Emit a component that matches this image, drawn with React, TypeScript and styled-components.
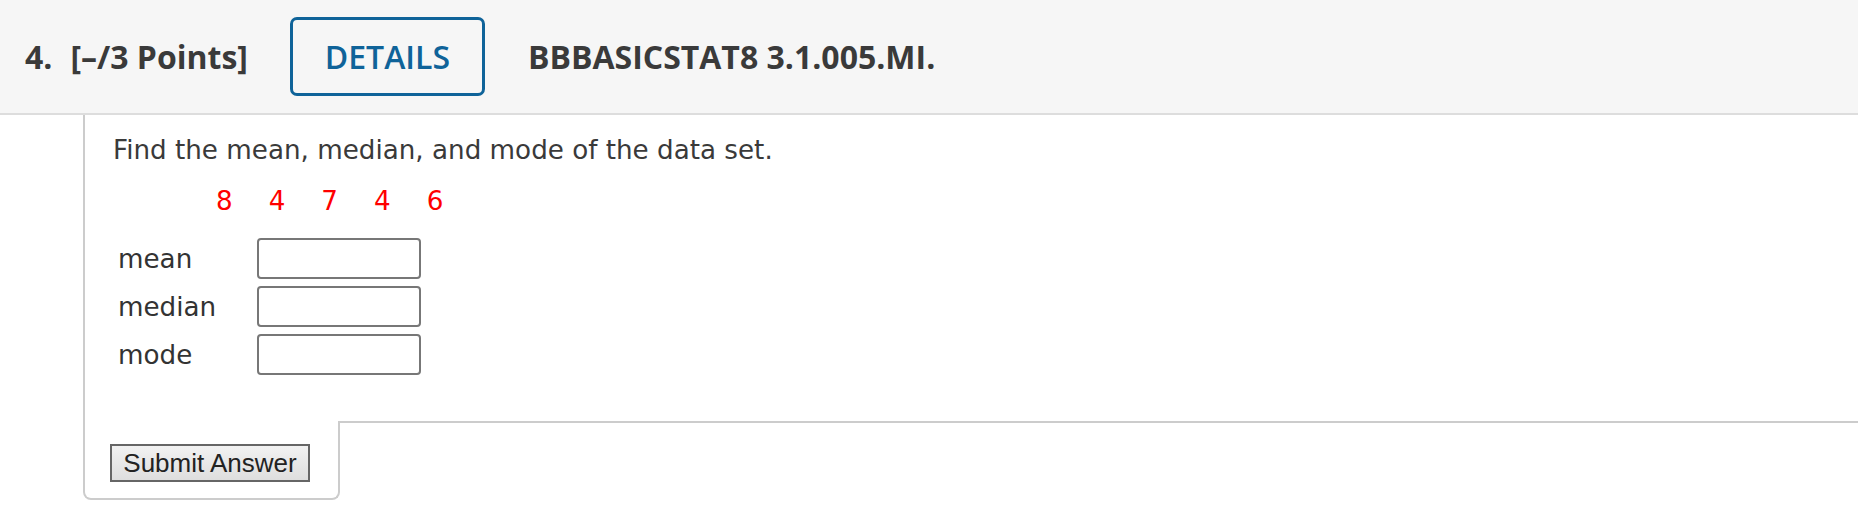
import React from "react";
import styled, { createGlobalStyle } from "styled-components";

const GlobalStyle = createGlobalStyle`
  html, body {
    margin: 0;
    padding: 0;
    background: #ffffff;
  }
  body {
    width: 1858px;
    font-family: "DejaVu Sans", Verdana, sans-serif;
    color: #333333;
  }
`;

const Page = styled.div`
  display: flex;
  flex-direction: column;
`;

const Header = styled.div`
  height: 113px;
  background: #f6f6f6;
  border-bottom: 2px solid #dddddd;
  display: flex;
  align-items: center;
  padding-left: 25px;
  font-family: "Open Sans", sans-serif;
  font-size: 32px;
  color: #3a3a3a;
`;

const QuestionNumber = styled.span`
  font-weight: 700;
`;

const Points = styled.span`
  font-weight: 700;
  margin-left: 18px;
`;

const DetailsButton = styled.button`
  margin-left: 42px;
  width: 195px;
  height: 79px;
  border: 3px solid #0f6399;
  border-radius: 7px;
  background: transparent;
  color: #0f6399;
  font-family: "Open Sans", sans-serif;
  font-size: 32px;
  font-weight: 600;
  padding: 0;
  cursor: pointer;
`;

const Title = styled.span`
  font-weight: 700;
  margin-left: 43px;
`;

const Card = styled.div`
  margin-left: 83px;
  display: flex;
  flex-direction: column;
`;

const Body = styled.div`
  border-left: 2px solid #cccccc;
  padding: 19px 0 46px 28px;
`;

const Prompt = styled.div`
  font-size: 26.2px;
  line-height: 32px;
  color: #3a3a3a;
`;

const DataRow = styled.div`
  display: flex;
  gap: 36px;
  margin: 19px 0 0 103px;
  font-size: 26.2px;
  line-height: 32px;
  color: #ff0000;
`;

const Fields = styled.div`
  display: flex;
  flex-direction: column;
  gap: 7px;
  margin: 21px 0 0 5px;
`;

const FieldRow = styled.div`
  display: flex;
  align-items: center;
`;

const FieldLabel = styled.label`
  width: 139px;
  font-size: 26.2px;
  line-height: 32px;
  color: #333333;
`;

const AnswerInput = styled.input`
  box-sizing: border-box;
  width: 164px;
  height: 41px;
  border: 2px solid #777777;
  border-radius: 4px;
  background: #ffffff;
  padding: 0 6px;
  font-size: 24px;
  outline: none;
`;

const Footer = styled.div`
  display: flex;
  align-items: flex-start;
`;

const SubmitBox = styled.div`
  box-sizing: border-box;
  width: 257px;
  border-left: 2px solid #cccccc;
  border-right: 2px solid #cccccc;
  border-bottom: 2px solid #cccccc;
  border-radius: 0 0 8px 8px;
  padding: 23px 0 16px 25px;
`;

const SubmitButton = styled.button`
  box-sizing: border-box;
  width: 200px;
  height: 38px;
  border: 2px solid #666666;
  border-radius: 0;
  background: linear-gradient(#f2f2f2, #dedede);
  color: #222222;
  font-family: "Liberation Sans", Arial, sans-serif;
  font-size: 26px;
  padding: 0;
  line-height: 1;
`;

const FooterRest = styled.div`
  flex: 1;
  border-top: 2px solid #cccccc;
`;

const values = [8, 4, 7, 4, 6];
const fields = ["mean", "median", "mode"];

export default function App() {
  return (
    <Page>
      <GlobalStyle />
      <Header>
        <QuestionNumber>4.</QuestionNumber>
        <Points>[–/3 Points]</Points>
        <DetailsButton type="button">DETAILS</DetailsButton>
        <Title>BBBASICSTAT8 3.1.005.MI.</Title>
      </Header>
      <Card>
        <Body>
          <Prompt>Find the mean, median, and mode of the data set.</Prompt>
          <DataRow>
            {values.map((v, i) => (
              <span key={i}>{v}</span>
            ))}
          </DataRow>
          <Fields>
            {fields.map((f) => (
              <FieldRow key={f}>
                <FieldLabel>{f}</FieldLabel>
                <AnswerInput type="text" />
              </FieldRow>
            ))}
          </Fields>
        </Body>
        <Footer>
          <SubmitBox>
            <SubmitButton type="button">Submit Answer</SubmitButton>
          </SubmitBox>
          <FooterRest />
        </Footer>
      </Card>
    </Page>
  );
}
